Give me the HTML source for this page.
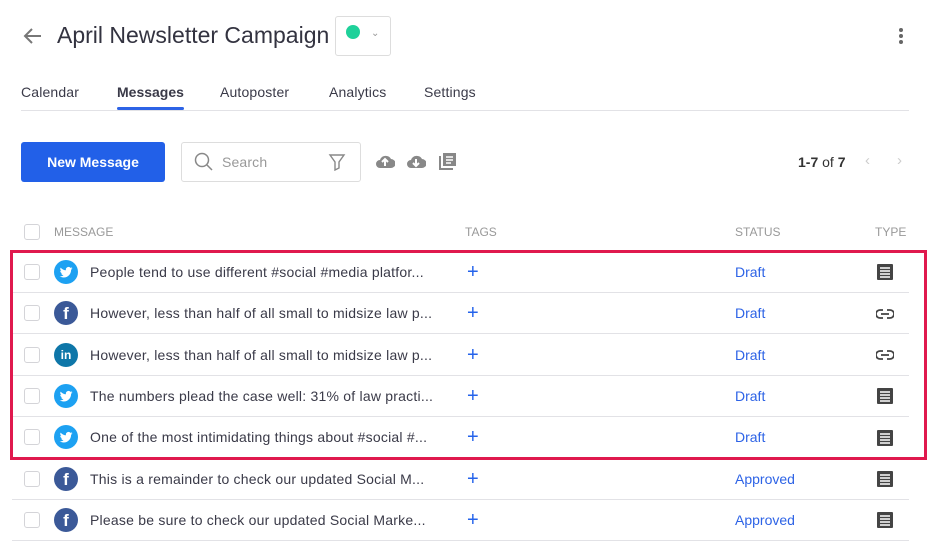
<!DOCTYPE html>
<html><head><style>
*{box-sizing:border-box;margin:0;padding:0}
body{width:930px;height:557px;overflow:hidden;background:#fff;font-family:"Liberation Sans",sans-serif;color:#3a3a48;position:relative}
.a{position:absolute}
.cb{position:absolute;left:24px;width:16px;height:16px;border:1px solid #d4d4d8;border-radius:3px;background:#fff}
.row{position:absolute;left:12px;width:897px;height:41px;border-bottom:1px solid #e2e2e6}
.msg{position:absolute;left:90px;font-size:14px;letter-spacing:0.22px;color:#3a3a48;white-space:nowrap}
.plus{position:absolute;left:467px;font-size:20px;color:#2563eb;line-height:1}
.st{position:absolute;left:735px;font-size:14px;color:#2d63e6}
.ic{position:absolute;left:54px;width:24px;height:24px;border-radius:50%;color:#fff;text-align:center;font-weight:bold}
.tw{background:#1da1f2}.fb{background:#3b5998}.li{background:#0e76a8}
.t{font-size:14px;letter-spacing:0.15px}
</style></head><body>
<svg width="0" height="0" style="position:absolute"><defs><symbol id="bird" viewBox="0 0 24 24"><circle cx="12" cy="12" r="12" fill="#1da1f2"/><path d="M18.5 8.2c-.5.2-1 .4-1.5.4.6-.3 1-.8 1.200-1.400-.5.3-1.100.5-1.700.7a2.600 2.600 0 00-4.500 2.400c-2.200-.1-4.100-1.200-5.400-2.700-.7 1.200-.3 2.700.8 3.500-.4 0-.8-.1-1.200-.3 0 1.300.9 2.400 2.100 2.600-.4.1-.8.1-1.200 0 .3 1.100 1.300 1.800 2.400 1.800-1.100.9-2.400 1.200-3.900 1.100 1.200.8 2.600 1.200 4 1.200 4.900 0 7.600-4.100 7.500-7.800.5-.4 1-.9 1.400-1.500z" fill="#fff"/></symbol></defs></svg>
<svg class="a" style="left:23px;top:27px" width="20" height="18" viewBox="0 0 20 18"><path d="M18 9H3M9 2L2 9l7 7" fill="none" stroke="#777" stroke-width="2"/></svg>
<div class="a" style="left:57px;top:22px;font-size:23px;color:#333340">April Newsletter Campaign</div>
<div class="a" style="left:335px;top:16px;width:56px;height:40px;border:1px solid #ddd;border-radius:3px"></div>
<div class="a" style="left:346px;top:25px;width:14px;height:14px;border-radius:50%;background:#1fd19a"></div>
<div class="a" style="left:371px;top:28px;font-size:10px;color:#999">&#8964;</div>
<div class="a" style="left:899px;top:28px;width:4px;height:4px;border-radius:50%;background:#666;box-shadow:0 6px 0 #666,0 12px 0 #666"></div>
<div class="a t" style="left:21px;top:84px">Calendar</div>
<div class="a t" style="left:117px;top:84px;font-weight:bold;letter-spacing:0">Messages</div>
<div class="a" style="left:117px;top:107px;width:67px;height:3px;border-radius:2px;background:#2d63e6"></div>
<div class="a t" style="left:220px;top:84px">Autoposter</div>
<div class="a t" style="left:329px;top:84px">Analytics</div>
<div class="a t" style="left:424px;top:84px">Settings</div>
<div class="a" style="left:21px;top:110px;width:888px;height:1px;background:#e2e2e6"></div>
<div class="a" style="left:21px;top:142px;width:144px;height:40px;background:#2260e8;border-radius:3px;color:#fff;font-size:14px;font-weight:bold;text-align:center;line-height:40px">New Message</div>
<div class="a" style="left:181px;top:142px;width:180px;height:40px;border:1px solid #ddd;border-radius:3px"></div>
<svg class="a" style="left:194px;top:152px" width="20" height="20" viewBox="0 0 20 20"><circle cx="8" cy="8" r="6.5" fill="none" stroke="#888" stroke-width="1.5"/><path d="M13 13l5 5" stroke="#888" stroke-width="1.5"/></svg>
<div class="a t" style="left:222px;top:154px;color:#999">Search</div>
<svg class="a" style="left:328px;top:153px" width="18" height="18" viewBox="0 0 18 18"><path d="M2 2h14l-5 7v6l-4 2V9z" fill="none" stroke="#888" stroke-width="1.4"/></svg>
<svg class="a" style="left:375px;top:153px" width="20" height="16" viewBox="0 0 20 16"><path d="M5 15a4 4 0 010-8 6 6 0 0111-1 4.5 4.5 0 010 9z" fill="#888"/><path d="M10 13V7M7 9l3-3 3 3" stroke="#fff" stroke-width="2" fill="none"/></svg>
<svg class="a" style="left:406px;top:153px" width="20" height="16" viewBox="0 0 20 16"><path d="M5 15a4 4 0 010-8 6 6 0 0111-1 4.5 4.5 0 010 9z" fill="#888"/><path d="M10 6v6M7 10l3 3 3-3" stroke="#fff" stroke-width="2" fill="none"/></svg>
<svg class="a" style="left:439px;top:152px" width="18" height="18" viewBox="0 0 18 18"><rect x="4" y="1" width="13" height="13" fill="#888"/><path d="M1 4v13h13" fill="none" stroke="#888" stroke-width="2"/><path d="M7 5h7M7 8h7M7 11h5" stroke="#fff" stroke-width="1.5"/></svg>
<div class="a" style="left:798px;top:154px;font-size:14px;color:#333"><b>1-7</b> of <b>7</b></div>
<div class="a" style="left:865px;top:152px;font-size:15px;color:#ccc">&#8249;</div>
<div class="a" style="left:897px;top:152px;font-size:15px;color:#ccc">&#8250;</div>
<div class="cb" style="top:224px"></div>
<div class="a" style="left:54px;top:225px;font-size:12px;color:#999">MESSAGE</div>
<div class="a" style="left:465px;top:225px;font-size:12px;color:#999">TAGS</div>
<div class="a" style="left:735px;top:225px;font-size:12px;color:#999">STATUS</div>
<div class="a" style="left:875px;top:225px;font-size:12px;color:#999">TYPE</div>
<div class="a" style="left:12px;top:251px;width:897px;height:1px;background:#e2e2e6"></div>

<div class="row" style="top:252px"></div><div class="row" style="top:293px"></div><div class="row" style="top:335px"></div><div class="row" style="top:376px"></div><div class="row" style="top:417px"></div><div class="row" style="top:459px"></div><div class="row" style="top:500px"></div>

<div class="cb" style="top:264px"></div><svg class="a" style="left:54px;top:260px" width="24" height="24"><use href="#bird"/></svg><div class="msg" style="top:264px">People tend to use different #social #media platfor...</div><div class="plus" style="top:262px">+</div><div class="st" style="top:264px">Draft</div>
<div class="cb" style="top:305px"></div><div class="ic fb" style="top:301px;font-size:17px;line-height:26px">f</div><div class="msg" style="top:305px">However, less than half of all small to midsize law p...</div><div class="plus" style="top:303px">+</div><div class="st" style="top:305px">Draft</div>
<div class="cb" style="top:347px"></div><div class="ic li" style="top:343px;font-size:12px;line-height:24px">in</div><div class="msg" style="top:347px">However, less than half of all small to midsize law p...</div><div class="plus" style="top:345px">+</div><div class="st" style="top:347px">Draft</div>
<div class="cb" style="top:388px"></div><svg class="a" style="left:54px;top:384px" width="24" height="24"><use href="#bird"/></svg><div class="msg" style="top:388px">The numbers plead the case well: 31% of law practi...</div><div class="plus" style="top:386px">+</div><div class="st" style="top:388px">Draft</div>
<div class="cb" style="top:429px"></div><svg class="a" style="left:54px;top:425px" width="24" height="24"><use href="#bird"/></svg><div class="msg" style="top:429px">One of the most intimidating things about #social #...</div><div class="plus" style="top:427px">+</div><div class="st" style="top:429px">Draft</div>
<div class="cb" style="top:471px"></div><div class="ic fb" style="top:467px;font-size:17px;line-height:26px">f</div><div class="msg" style="top:471px">This is a remainder to check our updated Social M...</div><div class="plus" style="top:469px">+</div><div class="st" style="top:471px">Approved</div>
<div class="cb" style="top:512px"></div><div class="ic fb" style="top:508px;font-size:17px;line-height:26px">f</div><div class="msg" style="top:512px">Please be sure to check our updated Social Marke...</div><div class="plus" style="top:510px">+</div><div class="st" style="top:512px">Approved</div>

<svg class="a" style="left:877px;top:264px" width="16" height="16"><rect width="16" height="16" rx="1" fill="#444"/><path d="M3 4h10M3 7h10M3 10h10M3 13h10" stroke="#fff" stroke-width="1.4"/></svg>
<svg class="a" style="left:876px;top:309px" width="18" height="10"><path d="M7 1H4a4 4 0 000 8h3M11 1h3a4 4 0 010 8h-3M5 5h8" fill="none" stroke="#444" stroke-width="1.8"/></svg>
<svg class="a" style="left:876px;top:350px" width="18" height="10"><path d="M7 1H4a4 4 0 000 8h3M11 1h3a4 4 0 010 8h-3M5 5h8" fill="none" stroke="#444" stroke-width="1.8"/></svg>
<svg class="a" style="left:877px;top:388px" width="16" height="16"><rect width="16" height="16" rx="1" fill="#444"/><path d="M3 4h10M3 7h10M3 10h10M3 13h10" stroke="#fff" stroke-width="1.4"/></svg>
<svg class="a" style="left:877px;top:430px" width="16" height="16"><rect width="16" height="16" rx="1" fill="#444"/><path d="M3 4h10M3 7h10M3 10h10M3 13h10" stroke="#fff" stroke-width="1.4"/></svg>
<svg class="a" style="left:877px;top:471px" width="16" height="16"><rect width="16" height="16" rx="1" fill="#444"/><path d="M3 4h10M3 7h10M3 10h10M3 13h10" stroke="#fff" stroke-width="1.4"/></svg>
<svg class="a" style="left:877px;top:512px" width="16" height="16"><rect width="16" height="16" rx="1" fill="#444"/><path d="M3 4h10M3 7h10M3 10h10M3 13h10" stroke="#fff" stroke-width="1.4"/></svg>

<div class="a" style="left:10px;top:250px;width:917px;height:210px;border:3px solid #e0194e"></div>
</body></html>
